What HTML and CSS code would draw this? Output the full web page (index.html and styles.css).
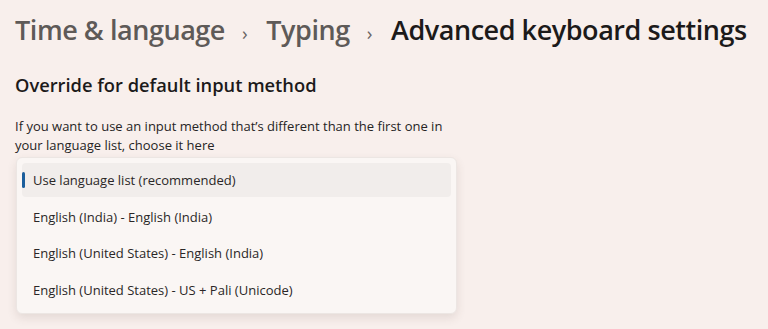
FILE: index.html
```html
<!DOCTYPE html>
<html>
<head>
<meta charset="utf-8">
<link rel="stylesheet" href="styles.css">
</head>
<body>
<div class="page">
  <h1 class="crumbs">
    <span class="crumb">Time &amp; language</span>
    <span class="sep">›</span>
    <span class="crumb">Typing</span>
    <span class="sep">›</span>
    <span class="crumb current">Advanced keyboard settings</span>
  </h1>
  <h2 class="section-title">Override for default input method</h2>
  <p class="desc">If you want to use an input method that’s different than the first one in your language list, choose it here</p>
  <div class="menu">
    <div class="item selected"><span class="accent"></span>Use language list (recommended)</div>
    <div class="item">English (India) - English (India)</div>
    <div class="item">English (United States) - English (India)</div>
    <div class="item">English (United States) - US + Pali (Unicode)</div>
  </div>
</div>
</body>
</html>
```
FILE: styles.css
```css
html, body {
  margin: 0;
  padding: 0;
  background: #f8efec;
}
body {
  font-family: "Open Sans", "Noto Sans", sans-serif;
  width: 768px;
  height: 329px;
  overflow: hidden;
}
.page {
  padding: 12px 0 0 15px;
}
.crumbs {
  margin: 0;
  display: flex;
  align-items: baseline;
  font-size: 27px;
  font-weight: 600;
  line-height: 36px;
  letter-spacing: -0.45px;
  color: #5e5a58;
  white-space: nowrap;
}
.sep {
  font-size: 19px;
  font-weight: 400;
  margin: 0 19px 0 17px;
  color: #6a6664;
}
.crumb.current {
  color: #1c1a1a;
}
.section-title {
  margin: 22px 0 0 0;
  font-size: 18.3px;
  font-weight: 600;
  line-height: 24px;
  color: #1c1a1a;
}
.desc {
  margin: 20px 0 0 0;
  width: 440px;
  font-size: 13px;
  line-height: 19px;
  color: #262424;
}
.menu {
  margin: 2px 0 0 1px;
  width: 441px;
  box-sizing: border-box;
  padding: 5px 5px 6px 5px;
  background: #faf6f4;
  border: 1px solid #ece6e3;
  border-radius: 6px;
  box-shadow: 0 4px 10px rgba(80, 60, 50, 0.12);
}
.item {
  position: relative;
  height: 34px;
  line-height: 34px;
  padding-left: 11px;
  margin-bottom: 2.5px;
  font-size: 13px;
  color: #2a2727;
  border-radius: 4px;
}
.item:last-child {
  margin-bottom: 0;
}
.item.selected {
  background: #f1edeb;
}
.accent {
  position: absolute;
  left: 0;
  top: 9px;
  width: 3px;
  height: 16px;
  border-radius: 2px;
  background: #1b5e9c;
}
```
